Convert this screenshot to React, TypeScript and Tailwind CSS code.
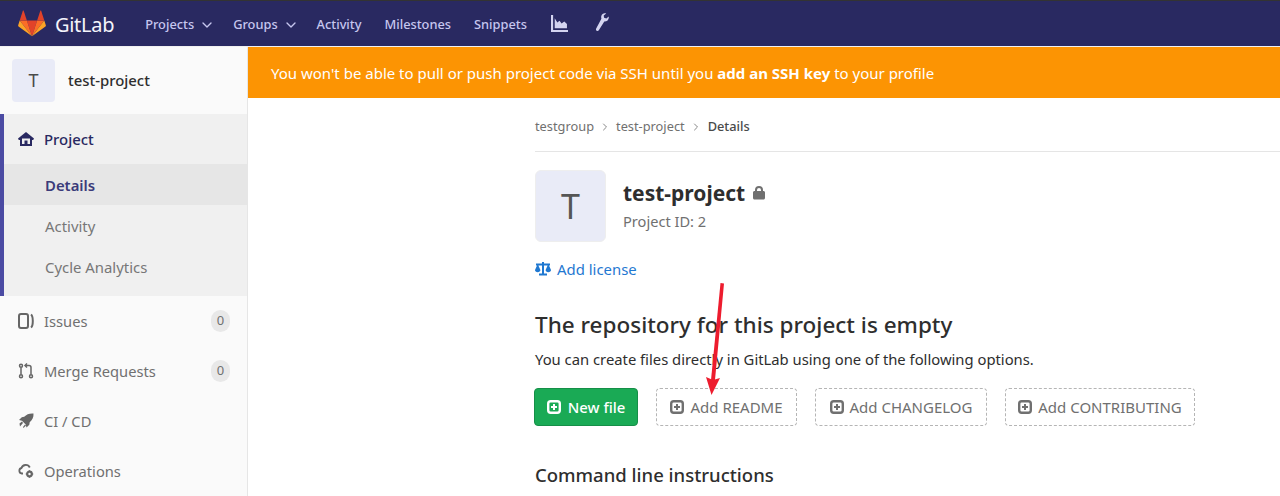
import { ChevronDown, ChevronRight } from 'lucide-react';

const FONT = "font-['Noto_Sans','Open_Sans',sans-serif]";

function Tanuki() {
  return (
    <svg width="28" height="27" viewBox="0 0 36 34">
      <path d="M18 33.5 24.6 13H11.4z" fill="#e24329" />
      <path d="M18 33.5 11.4 13H2.2z" fill="#fc6d26" />
      <path d="M2.2 13 .2 19.3c-.2.6 0 1.200.5 1.500L18 33.500z" fill="#fca326" />
      <path d="M2.200 13h9.200L7.400.8c-.2-.6-1.100-.6-1.300 0z" fill="#e24329" />
      <path d="M18 33.500 24.600 13h9.200z" fill="#fc6d26" />
      <path d="M33.800 13l2 6.300c.2.600 0 1.200-.5 1.500L18 33.500z" fill="#fca326" />
      <path d="M33.800 13h-9.200L28.600.8c.2-.6 1.100-.6 1.300 0z" fill="#e24329" />
    </svg>
  );
}

function ChartIcon() {
  return (
    <svg width="17" height="17" viewBox="0 0 16 16" fill="currentColor">
      <path d="M0 0h2v14h14v2H0z" />
      <path d="M3.500 3 6 7l2-1.500 2 2.500 2.500-2L15 8.500V12.500H3.500z" />
    </svg>
  );
}

function WrenchIcon() {
  return (
    <svg width="14" height="19" viewBox="0 0 14 19" fill="currentColor">
      <path d="M9.500.3c-2.300.3-3.700 2.300-3.300 4.500l.2 1L1.200 15.500c-.4.800-.3 1.700.4 2.200.8.500 1.700.3 2.200-.4L9.300 8.600c2.200.2 4-1.200 4.400-3.300.1-.6.100-1.100 0-1.700l-2.300 2-2.300-.8-.4-2.400L11.200.4C10.600.2 10.100.2 9.500.3z" />
    </svg>
  );
}

function HomeIcon() {
  return (
    <svg width="16" height="16" viewBox="0 0 16 16" fill="currentColor">
      <path fillRule="evenodd" d="M8 1 0 7.500l.8 1.500H2v6h12V9h1.200l.8-1.500zM4 13V7.500h8V13h-2.500V9.500h-3V13z" />
    </svg>
  );
}

function IssuesIcon() {
  return (
    <svg width="16" height="16" viewBox="0 0 16 16" fill="none" stroke="currentColor" strokeWidth="2">
      <rect x="1" y="1" width="9" height="14" rx="2" />
      <path d="M13 1.500c1.300 1 1.800 3.500 1.800 6.500s-.5 5.500-1.800 6.500" />
    </svg>
  );
}

function MergeIcon() {
  return (
    <svg width="16" height="16" viewBox="0 0 16 16" fill="none" stroke="currentColor" strokeWidth="1.500">
      <circle cx="3" cy="2.800" r="1.500" />
      <circle cx="3" cy="13.200" r="1.500" />
      <circle cx="13" cy="13.200" r="1.500" />
      <path d="M3 4.500v7M13 11.500V4.500a2 2 0 0 0-2-2H7.500" />
      <path d="M9 .5 7 2.500l2 2" />
    </svg>
  );
}

function RocketIcon() {
  return (
    <svg width="16" height="16" viewBox="0 0 16 16" fill="currentColor">
      <path d="M15.500.5c-4-.3-7 .8-9.300 3.300L3.800 4.200 1 7l3 .8 3.700 3.700.8 3 2.800-2.800.4-2.400C14.200 7 15.800 4.500 15.500.5z" />
      <path d="M1.500 10.500 4 8.500l1 1.500-3 3.500zM5 14l2-2.500 1 1-2.500 2.500z" />
    </svg>
  );
}

function OperationsIcon() {
  return (
    <svg width="16" height="16" viewBox="0 0 16 16" fill="none" stroke="currentColor" strokeWidth="1.800">
      <path d="M5 10.500H3.800A2.800 2.800 0 0 1 3.500 5 4.500 4.500 0 0 1 11.800 4.500" />
      <circle cx="11.500" cy="11" r="2.300" strokeWidth="2.200" />
      <path d="M11.500 7.200v1M11.500 13.800v1M7.800 11h1M14.200 11h1" strokeWidth="1.400" />
    </svg>
  );
}

function LockIcon() {
  return (
    <svg width="12" height="14" viewBox="0 0 12 14" fill="currentColor">
      <path fillRule="evenodd" d="M2 5V4a4 4 0 0 1 8 0v1h.5c.8 0 1.500.7 1.500 1.500V12c0 .8-.7 1.500-1.500 1.500h-9C.7 13.500 0 12.800 0 12V6.500C0 5.700.7 5 1.500 5zm2 0h4V4a2 2 0 0 0-4 0z" />
    </svg>
  );
}

function ScaleIcon() {
  return (
    <svg width="16" height="14" viewBox="0 0 16 14" fill="currentColor">
      <path d="M7 0h2v1.500h6v2h-1l2 4.500c0 1.300-1.200 2.200-2.700 2.200S10.600 9.300 10.600 8l2-4.500H9v8h3V13.500H4v-2h3v-8H3.400l2 4.500c0 1.300-1.200 2.200-2.700 2.200S0 9.300 0 8l2-4.500H1v-2h6z" />
    </svg>
  );
}

function PlusSquare({ className }: { className?: string }) {
  return (
    <svg width="14" height="14" viewBox="0 0 14 14" className={className} fill="none" stroke="currentColor">
      <rect x="1.200" y="1.200" width="11.600" height="11.600" rx="2.500" strokeWidth="2.400" />
      <path d="M7 4v6M4 7h6" strokeWidth="2" />
    </svg>
  );
}

function TopNav() {
  const link = 'text-[12.800px] font-medium text-[#c6c6ef]';
  return (
    <header className="h-[46px] shrink-0 border-t border-[#333] bg-[#292961] flex items-center pl-[18px]">
      <Tanuki />
      <span className="ml-[9px] mt-[3px] text-[20px] text-[#f4f4fb] tracking-[-0.3px]">GitLab</span>
      <nav className="ml-[31px] mt-[3px] flex items-center">
        <span className={`${link} flex items-center gap-[5px]`}>
          Projects <ChevronDown size={16} />
        </span>
        <span className={`${link} ml-[18px] flex items-center gap-[5px]`}>
          Groups <ChevronDown size={16} />
        </span>
        <span className={`${link} ml-[18px]`}>Activity</span>
        <span className={`${link} ml-[23px]`}>Milestones</span>
        <span className={`${link} ml-[23px]`}>Snippets</span>
        <span className="ml-[24px] -mt-[4px] text-[#d4d4f0]">
          <ChartIcon />
        </span>
        <span className="ml-[27px] -mt-[5px] text-[#d4d4f0]">
          <WrenchIcon />
        </span>
      </nav>
    </header>
  );
}

function SideItem({ icon, label, count }: { icon: React.ReactNode; label: string; count?: number }) {
  return (
    <div className="h-[50px] flex items-center pl-[18px] pr-[17px] text-[14.700px] text-[#707070]">
      <span className="w-[26px] text-[#666]">{icon}</span>
      <span>{label}</span>
      {count !== undefined && (
        <span className="ml-auto w-[19px] h-[22px] rounded-full bg-[#e8e8e8] flex items-center justify-center text-[13px]">
          {count}
        </span>
      )}
    </div>
  );
}

function Sidebar() {
  const subItem = 'h-[41px] pt-[2px] flex items-center pl-[41px] text-[14.900px]';
  return (
    <aside className="w-[248px] shrink-0 bg-[#fafafa] border-r border-[#e6e6e6]">
      <div className="h-[67px] flex items-center pl-[12px]">
        <div className="w-[43px] h-[43px] rounded-[4px] bg-[#e9ebf7] flex items-center justify-center text-[18px] text-[#4a4a4a]">
          T
        </div>
        <span className="ml-[13px] text-[14.900px] font-medium text-[#2e2e2e]">test-project</span>
      </div>
      <div className="bg-[#f0f0f0] border-l-[4px] border-[#4b4ba3] h-[182px]">
        <div className="h-[50px] flex items-center pl-[14px] text-[14.900px] font-medium text-[#292961]">
          <span className="w-[26px]">
            <HomeIcon />
          </span>
          Project
        </div>
        <div className={`${subItem} bg-[#e6e6e6] font-semibold text-[#3b3b7a]`}>Details</div>
        <div className={`${subItem} text-[#777]`}>Activity</div>
        <div className={`${subItem} text-[#777]`}>Cycle Analytics</div>
      </div>
      <SideItem icon={<IssuesIcon />} label="Issues" count={0} />
      <SideItem icon={<MergeIcon />} label="Merge Requests" count={0} />
      <SideItem icon={<RocketIcon />} label="CI / CD" />
      <SideItem icon={<OperationsIcon />} label="Operations" />
    </aside>
  );
}

function DashedButton({ label, width }: { label: string; width: string }) {
  return (
    <div className={`${width} h-[38px] rounded-[4px] border border-dashed border-[#b5b5b5] flex items-center justify-center gap-[6px] text-[15px] text-[#707070]`}>
      <PlusSquare className="text-[#707070]" />
      {label}
    </div>
  );
}

export default function App() {
  return (
    <div className={`relative w-[1280px] h-[496px] overflow-hidden bg-white flex flex-col ${FONT}`}>
      <TopNav />
      <div className="flex flex-1 min-h-0 border-t border-[#f0f0f0]">
        <Sidebar />
        <main className="flex-1 min-w-0">
          <div className="h-[51px] pt-[1px] bg-[#fc9403] flex items-center pl-[23px] text-[15px] text-white">
            <span>
              You won't be able to pull or push project code via SSH until you <b className="font-bold">add an SSH key</b> to your profile
            </span>
          </div>
          <div className="ml-[287px]">
            <div className="h-[54px] pt-[5px] flex items-center border-b border-[#e5e5e5] text-[12.800px] text-[#707070]">
              testgroup
              <ChevronRight size={12} className="mx-[5px] text-[#888]" />
              test-project
              <ChevronRight size={12} className="mx-[5.500px] text-[#888]" />
              <span className="font-medium text-[#4a4a4a]">Details</span>
            </div>
            <div className="mt-[18px] flex">
              <div className="w-[71px] h-[72px] rounded-[6px] border border-[#eee] bg-[#e9ebf7] flex items-center justify-center text-[34px] text-[#555]">
                T
              </div>
              <div className="ml-[17px] pt-[7px]">
                <div className="flex items-center gap-[8px]">
                  <span className="text-[21px] font-bold text-[#2e2e2e] leading-[32px]">test-project</span>
                  <span className="text-[#707070]">
                    <LockIcon />
                  </span>
                </div>
                <div className="mt-[2px] text-[14.600px] text-[#707070] leading-[20px]">Project ID: 2</div>
              </div>
            </div>
            <div className="mt-[16px] flex items-center gap-[6px] text-[14.900px] text-[#1f78d1]">
              <ScaleIcon />
              Add license
            </div>
            <h2 className="mt-[29px] text-[22.500px] font-medium text-[#2e2e2e] leading-[32px]">The repository for this project is empty</h2>
            <p className="mt-[8px] text-[14.800px] text-[#2e2e2e] leading-[20px]">You can create files directly in GitLab using one of the following options.</p>
            <div className="mt-[19px] -ml-[1px] flex gap-[18px]">
              <div className="w-[104px] h-[38px] rounded-[4px] bg-[#1aaa55] border border-[#168f48] flex items-center justify-center gap-[7px] text-[14.900px] font-medium text-white">
                <PlusSquare />
                New file
              </div>
              <DashedButton label="Add README" width="w-[141px]" />
              <DashedButton label="Add CHANGELOG" width="w-[172px]" />
              <DashedButton label="Add CONTRIBUTING" width="w-[190px]" />
            </div>
            <h3 className="mt-[36px] text-[18.500px] font-medium text-[#2e2e2e] leading-[26px]">Command line instructions</h3>
          </div>
        </main>
      </div>
      <svg className="absolute left-[700px] top-[278px]" width="30" height="120" viewBox="0 0 30 120">
        <path d="M20.500 5 24 5.500 15 102 11 102z" fill="#ed1c2e" />
        <path d="M6 99 13 102 20 100 11.500 117z" fill="#ed1c2e" />
      </svg>
    </div>
  );
}
